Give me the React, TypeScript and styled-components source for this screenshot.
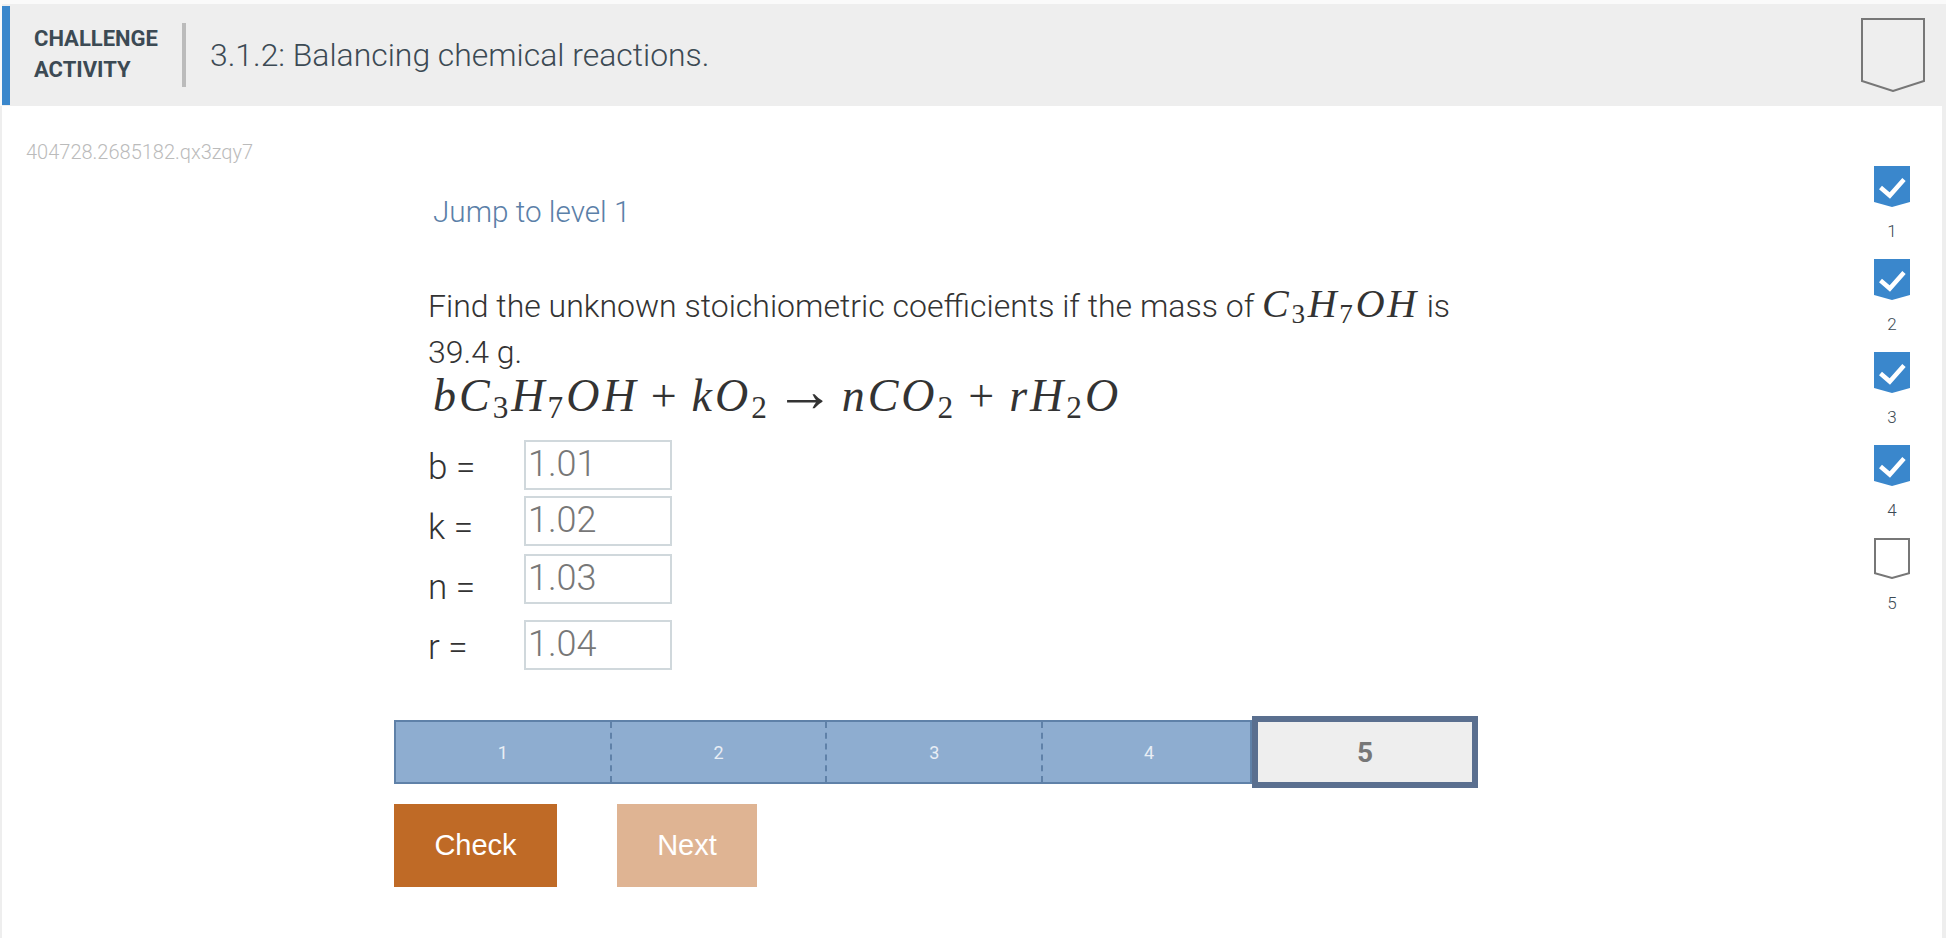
import React from 'react';
import styled, { createGlobalStyle } from 'styled-components';

const GlobalStyle = createGlobalStyle`
  html, body {
    margin: 0;
    padding: 0;
    background: #fafafa;
  }
  * {
    box-sizing: border-box;
  }
`;

const Page = styled.div`
  min-height: 100vh;
  padding-top: 4px;
  font-family: Roboto, "Liberation Sans", sans-serif;
  font-weight: 300;
  display: flex;
  flex-direction: column;
`;

const Header = styled.header`
  height: 102px;
  background: #eeeeee;
  border-left: 2px solid #fafafa;
  display: flex;
  align-items: center;
  padding-right: 21px;
  position: relative;
`;

const AccentBar = styled.div`
  position: absolute;
  left: 0;
  top: 2px;
  bottom: 1px;
  width: 8px;
  background: #3a87cc;
`;

const Kind = styled.div`
  margin-left: 32px;
  width: 152px;
  height: 64px;
  border-right: 4px solid #bbbbbb;
  font-size: 22px;
  font-weight: 700;
  line-height: 31px;
  color: #3c4a54;
`;

const Title = styled.h1`
  margin: 0 0 1px 24px;
  flex: 1;
  font-size: 31.9px;
  font-weight: 300;
  color: #3c4a54;
`;

const Card = styled.div`
  flex: 1;
  display: flex;
  background: #ffffff;
  border-left: 2px solid #eeeeee;
  border-right: 4px solid #eeeeee;
`;

const Main = styled.main`
  flex: 1;
`;

const ActivityId = styled.div`
  margin: 33px 0 0 24px;
  font-size: 20px;
  line-height: 26px;
  color: #bbbbbb;
`;

const Level = styled.div`
  margin: 27px 0 0 431px;
  font-size: 29.7px;
  line-height: 40px;
  color: #5b80a8;
`;

const Question = styled.div`
  margin: 51px 0 0 426px;
  width: 1040px;
  font-size: 32px;
  line-height: 46px;
  color: #333333;
`;

const MathText = styled.span`
  font-family: "Liberation Serif", serif;
  font-style: italic;
  font-weight: 400;
  font-size: 40px;
  line-height: 0;
  letter-spacing: 2.7px;
`;

const Equation = styled.div`
  margin: -4px 0 0 431px;
  height: 50px;
  font-family: "Liberation Serif", serif;
  font-style: italic;
  font-weight: 400;
  font-size: 46px;
  line-height: 50px;
  letter-spacing: 3px;
  color: #333333;
  white-space: nowrap;
`;

const Sub = styled.sub`
  font-size: 0.68em;
  font-style: normal;
  line-height: 0;
  vertical-align: -0.22em;
`;

const Op = styled.span`
  font-style: normal;
  margin: 0 12px;
`;

const Arrow = styled.span`
  font-style: normal;
  font-size: 1.3em;
  line-height: 0;
  margin: 0 4px 0 5px;
`;

const Fields = styled.div`
  margin: 19px 0 0 426px;
  display: flex;
  flex-direction: column;
`;

const FieldRow = styled.div<{ $gap: number }>`
  display: flex;
  align-items: flex-start;
  height: 50px;
  margin-bottom: ${p => p.$gap}px;
`;

const FieldLabel = styled.label<{ $drop: number }>`
  width: 96px;
  font-size: 35px;
  line-height: 40px;
  padding-top: ${p => p.$drop}px;
  color: #333333;
`;

const FieldInput = styled.input`
  width: 148px;
  height: 50px;
  border: 2.5px solid #d0d8dc;
  border-radius: 0;
  outline: none;
  background: #ffffff;
  padding: 0 0 2px 2px;
  font-family: Roboto, sans-serif;
  font-weight: 300;
  font-size: 36px;
  color: #777777;

  &::placeholder {
    color: #777777;
    opacity: 1;
  }
`;

const Progress = styled.div`
  margin: 46px 0 0 392px;
  display: flex;
  align-items: center;
`;

const Steps = styled.div`
  width: 858px;
  height: 64px;
  display: flex;
  background: #8eadd0;
  border: 2px solid #5f81a8;
`;

const Step = styled.div`
  flex: 0 0 215.7px;
  display: flex;
  align-items: center;
  justify-content: center;
  font-size: 18px;
  font-weight: 400;
  color: #e8eef5;
  border-right: 2px dashed #5f81a8;

  &:last-child {
    flex: 1;
    padding-left: 5px;
    border-right: none;
  }
`;

const ActiveStep = styled.div`
  width: 226px;
  height: 72px;
  display: flex;
  align-items: center;
  justify-content: center;
  background: #eeeeee;
  border: 6px solid #5a6f8f;
  font-size: 28px;
  font-weight: 700;
  color: #777777;
`;

const Actions = styled.div`
  margin: 16px 0 0 392px;
  display: flex;
  gap: 60px;
`;

const ActionButton = styled.button<{ $muted?: boolean }>`
  height: 83px;
  padding: 0;
  width: ${p => (p.$muted ? 140 : 163)}px;
  border: none;
  background: ${p => (p.$muted ? '#dfb493' : '#bf6a26')};
  color: #ffffff;
  font-family: "Liberation Sans", Arial, sans-serif;
  font-size: 29px;
`;

const Sidebar = styled.aside`
  width: 36px;
  margin: 60px 32px 0 0;
  display: flex;
  flex-direction: column;
`;

const LevelItem = styled.div`
  height: 93px;
  display: flex;
  flex-direction: column;
  align-items: center;
`;

const LevelNumber = styled.span`
  margin-top: 14px;
  font-size: 17px;
  font-weight: 300;
  line-height: 20px;
  color: #3c4a54;
`;

const Badge: React.FC<{ done: boolean }> = ({ done }) => (
  <svg width="36" height="41" viewBox="0 0 36 41">
    {done ? (
      <>
        <path d="M0 0H36V36L18 41L0 36Z" fill="#3a87cc" />
        <path d="M6.5 21.5L15.8 29.5L30 13.5" fill="none" stroke="#fff" strokeWidth="4.5" />
      </>
    ) : (
      <path d="M1 1H35V35.3L18 40L1 35.3Z" fill="none" stroke="#777" strokeWidth="2" />
    )}
  </svg>
);

const HeaderBadge = () => (
  <svg width="64" height="74" viewBox="0 0 64 74">
    <path d="M1 1H63V63L32 73L1 63Z" fill="none" stroke="#777" strokeWidth="2" />
  </svg>
);

const fields = [
  { name: 'b', value: '1.01', gap: 6, drop: 8 },
  { name: 'k', value: '1.02', gap: 8, drop: 12 },
  { name: 'n', value: '1.03', gap: 16, drop: 14 },
  { name: 'r', value: '1.04', gap: 0, drop: 8 },
];

const levels = [1, 2, 3, 4, 5];

export default function App() {
  return (
    <Page>
      <GlobalStyle />
      <Header>
        <AccentBar />
        <Kind>
          CHALLENGE
          <br />
          ACTIVITY
        </Kind>
        <Title>3.1.2: Balancing chemical reactions.</Title>
        <HeaderBadge />
      </Header>
      <Card>
        <Main>
          <ActivityId>404728.2685182.qx3zqy7</ActivityId>
          <Level>Jump to level 1</Level>
          <Question>
            Find the unknown stoichiometric coefficients if the mass of{' '}
            <MathText>
              C<Sub>3</Sub>H<Sub>7</Sub>OH
            </MathText>{' '}
            is 39.4 g.
          </Question>
          <Equation>
            bC<Sub>3</Sub>H<Sub>7</Sub>OH<Op>+</Op>kO<Sub>2</Sub>
            <Arrow>→</Arrow>nCO<Sub>2</Sub>
            <Op>+</Op>rH<Sub>2</Sub>O
          </Equation>
          <Fields>
            {fields.map(f => (
              <FieldRow key={f.name} $gap={f.gap}>
                <FieldLabel $drop={f.drop}>{f.name} =</FieldLabel>
                <FieldInput placeholder={f.value} readOnly />
              </FieldRow>
            ))}
          </Fields>
          <Progress>
            <Steps>
              {levels.slice(0, 4).map(n => (
                <Step key={n}>{n}</Step>
              ))}
            </Steps>
            <ActiveStep>5</ActiveStep>
          </Progress>
          <Actions>
            <ActionButton>Check</ActionButton>
            <ActionButton $muted>Next</ActionButton>
          </Actions>
        </Main>
        <Sidebar>
          {levels.map(n => (
            <LevelItem key={n}>
              <Badge done={n < 5} />
              <LevelNumber>{n}</LevelNumber>
            </LevelItem>
          ))}
        </Sidebar>
      </Card>
    </Page>
  );
}
